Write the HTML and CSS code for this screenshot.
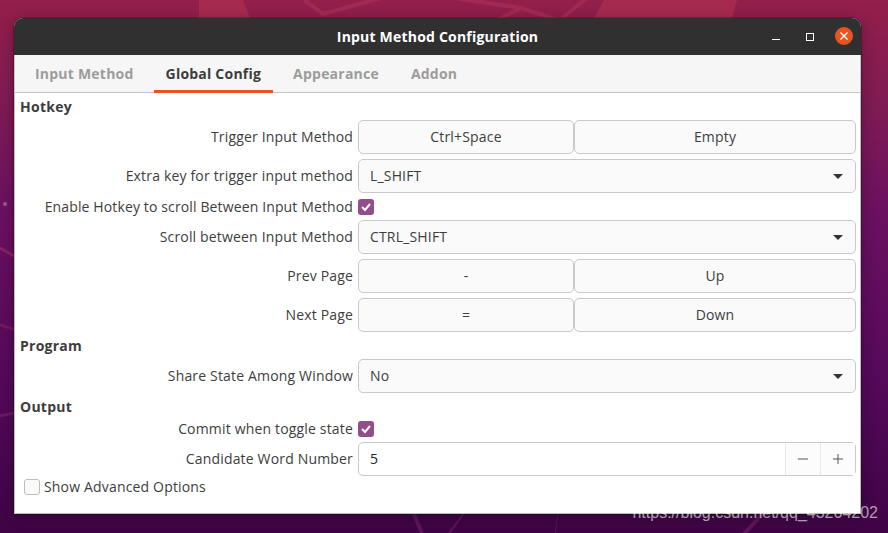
FILE: index.html
```html
<!DOCTYPE html>
<html lang="en">
<head>
<meta charset="utf-8">
<title>Input Method Configuration</title>
<link rel="stylesheet" href="styles.css">
</head>
<body>
<svg class="wall" viewBox="0 0 888 533" aria-hidden="true">
  <polygon points="199,0 243,0 250,18 199,18" fill="#a52a50"/>
  <polygon points="604,0 737,0 732,18 594,18" fill="#a52a50"/>
  <g fill="none" stroke="#a02a52" stroke-width="4">
    <path d="M304,0 L323,14 L395,-6"/>
    <path d="M454,-2 L521,8 L558,20"/>
    <path d="M497,20 L521,8"/>
    <path d="M560,20 L588,-3"/>
    <path d="M0,248 L14,256" stroke-width="3" stroke="#86245f"/>
    <path d="M0,325 L14,329" stroke-width="3" stroke="#74185f"/>
    <path d="M0,416 L14,413" stroke-width="3" stroke="#6a1a60"/>
    <path d="M413,512 L423,536" stroke="#5e1458"/>
    <path d="M465,512 L447,536" stroke-width="2" stroke="#5e1458"/>
    <path d="M558,512 L555,536" stroke-width="1" stroke="#5e1458"/>
    <path d="M764,512 L742,536" stroke="#5e1458"/>
  </g>
  <circle cx="5" cy="204" r="2" fill="#9a5a94"/>
</svg>
<main class="window">
  <header class="titlebar">
    <h1 class="title">Input Method Configuration</h1>
    <div class="controls">
      <svg class="ctl" width="16" height="16" viewBox="0 0 16 16"><rect x="4" y="11" width="8" height="1" fill="#fff"/></svg>
      <svg class="ctl" width="16" height="16" viewBox="0 0 16 16"><rect x="4.5" y="5.5" width="7" height="7" fill="none" stroke="#fff"/></svg>
      <span class="close"><svg width="18" height="18" viewBox="0 0 18 18"><path d="M5.5 5.5l7 7M12.5 5.5l-7 7" stroke="#fff" stroke-width="1.4" fill="none"/></svg></span>
    </div>
  </header>
  <nav class="tabs">
    <span class="tab">Input Method</span>
    <span class="tab active">Global Config</span>
    <span class="tab">Appearance</span>
    <span class="tab">Addon</span>
  </nav>
  <section class="body">
    <h2 class="heading">Hotkey</h2>
    <div class="row"><label class="lbl">Trigger Input Method</label><div class="pair"><button class="btn first">Ctrl+Space</button><button class="btn">Empty</button></div></div>
    <div class="row"><label class="lbl">Extra key for trigger input method</label><div class="combo"><span>L_SHIFT</span><i class="arrow"></i></div></div>
    <div class="row short"><label class="lbl tight">Enable Hotkey to scroll Between Input Method</label><span class="check on"><svg width="16" height="16" viewBox="0 0 16 16"><path d="M4 8l3 3 5-6" stroke="#fff" stroke-width="2" fill="none"/></svg></span></div>
    <div class="row"><label class="lbl">Scroll between Input Method</label><div class="combo"><span>CTRL_SHIFT</span><i class="arrow"></i></div></div>
    <div class="row"><label class="lbl">Prev Page</label><div class="pair"><button class="btn first">-</button><button class="btn">Up</button></div></div>
    <div class="row"><label class="lbl">Next Page</label><div class="pair"><button class="btn first">=</button><button class="btn">Down</button></div></div>
    <h2 class="heading">Program</h2>
    <div class="row"><label class="lbl">Share State Among Window</label><div class="combo"><span>No</span><i class="arrow"></i></div></div>
    <h2 class="heading">Output</h2>
    <div class="row short"><label class="lbl">Commit when toggle state</label><span class="check on"><svg width="16" height="16" viewBox="0 0 16 16"><path d="M4 8l3 3 5-6" stroke="#fff" stroke-width="2" fill="none"/></svg></span></div>
    <div class="row"><label class="lbl">Candidate Word Number</label><div class="spin"><span class="val">5</span><span class="step"><svg width="16" height="16" viewBox="0 0 16 16"><rect x="3" y="7.5" width="10" height="1" fill="#555"/></svg></span><span class="step"><svg width="16" height="16" viewBox="0 0 16 16"><path d="M3 8h10M8 3v10" stroke="#555" fill="none"/></svg></span></div></div>
    <div class="adv"><span class="check"></span><span>Show Advanced Options</span></div>
  </section>
</main>
<footer class="mark">https://blog.csdn.net/qq_43264202</footer>
</body>
</html>
```
FILE: styles.css
```css
* { box-sizing: border-box; }
html, body { margin: 0; height: 100%; }
body {
  position: relative;
  width: 888px;
  height: 533px;
  overflow: hidden;
  background: linear-gradient(180deg, #931f4a 0%, #7d1a55 22%, #6b1060 40%, #55095a 70%, #3f0445 100%);
  font-family: "Open Sans", "Noto Sans", sans-serif;
  font-size: 14px;
  letter-spacing: .17px;
  color: #3d3d3d;
}
.wall { position: absolute; inset: 0; width: 888px; height: 533px; }
.window {
  position: absolute;
  left: 14px;
  top: 18px;
  width: 847px;
  height: 496px;
  background: #fff;
  border-radius: 9px 9px 0 0;
  box-shadow: 0 0 0 1px rgba(0,0,0,.2), 0 3px 14px rgba(0,0,0,.3);
  overflow: hidden;
  display: flex;
  flex-direction: column;
}
.titlebar {
  height: 37px;
  flex: none;
  background: #303030;
  display: flex;
  align-items: center;
  justify-content: center;
  position: relative;
}
.title { margin: 0; font-size: 14px; font-weight: 700; color: #fff; letter-spacing: .2px; }
.controls {
  position: absolute;
  right: 8px;
  top: 9px;
  display: flex;
  align-items: center;
  gap: 18px;
}
.ctl { display: block; }
.close {
  width: 18px; height: 18px;
  border-radius: 50%;
  background: #e95420;
  display: block;
  margin-left: -1px;
}
.close svg { display: block; }
.tabs {
  height: 38px;
  flex: none;
  background: #f6f6f6;
  border: solid #c4c4c4;
  border-width: 0 1px 1px;
  display: flex;
  gap: 8px;
  font-weight: 700;
  font-size: 14px;
  letter-spacing: .22px;
  padding-left: 8px;
}
.tab { padding: 0 12px; line-height: 37px; color: #9c9c9c; margin-bottom: -1px; height: 38px; }
.tab.active { color: #3d3d3d; border-bottom: 3px solid #e95420; }
.body {
  flex: 1;
  display: flex;
  flex-direction: column;
  gap: 5px;
  padding: 5px 4px 0 5px;
  border: solid #bdbdbd;
  border-width: 0 1px 1px;
}
.heading { margin: 0; height: 17px; line-height: 17px; font-size: 14px; font-weight: 700; letter-spacing: .25px; color: #3d3d3d; }
.row { display: flex; align-items: center; height: 34px; gap: 5px; }
.row.short { height: 17px; }
.lbl { width: 333px; flex: none; text-align: right; white-space: nowrap; padding-bottom: 2px; }
.row.short .lbl { padding-bottom: 0; }
.lbl.tight { letter-spacing: .13px; }
.pair { flex: 1; display: flex; height: 34px; }
.btn, .combo, .spin {
  font: inherit;
  letter-spacing: inherit;
  color: #3d3d3d;
  background: #fafafa;
  border: 1px solid #c9c9c9;
  border-radius: 5px;
  height: 34px;
}
.btn { flex: 1 1 282px; padding: 0 0 2px; }
.btn.first { flex: 0 0 216px; }
.combo {
  flex: 1;
  display: flex;
  align-items: center;
  justify-content: space-between;
  padding: 0 12px 2px 11px;
}
.arrow { width: 0; height: 0; border: 5px solid transparent; border-top: 5px solid #333; border-bottom: 0; margin-top: 2px; }
.check {
  width: 16px; height: 16px;
  border-radius: 3px;
  border: 1px solid #bdbdbd;
  background: #fafafa;
  display: block;
  flex: none;
}
.check.on { background: #924d8b; border: 0; }
.check svg { display: block; }
.spin { flex: 1; display: flex; align-items: stretch; background: #fff; }
.val { flex: 1; padding-left: 11px; line-height: 31px; color: #222; }
.step { width: 35px; border-left: 1px solid #e8e8e8; display: flex; align-items: center; justify-content: center; background: #fcfcfc; }
.adv { display: flex; align-items: center; gap: 4px; padding-left: 4px; height: 17px; margin-top: -3px; }
.mark {
  position: absolute;
  right: 10px;
  top: 504px;
  font-family: "Liberation Sans", sans-serif;
  font-size: 16px;
  letter-spacing: 0;
  color: rgba(255,255,255,.6);
}
```
